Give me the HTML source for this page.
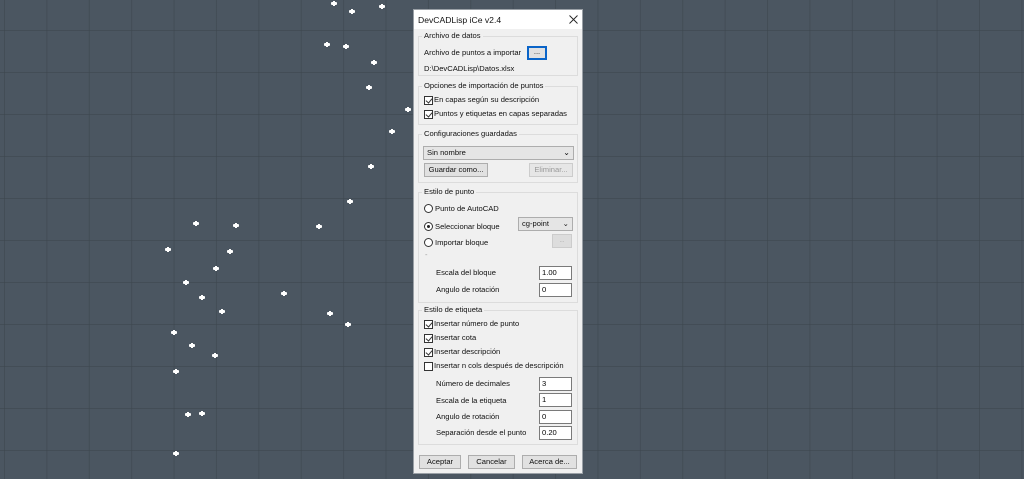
<!DOCTYPE html>
<html><head><meta charset="utf-8"><style>
*{margin:0;padding:0;box-sizing:border-box}
body{width:1024px;height:479px;overflow:hidden;position:relative;background-color:#4b5661;
background-image:linear-gradient(90deg,rgba(60,69,77,.55) 1px,transparent 1px),linear-gradient(0deg,rgba(60,69,77,.55) 1px,transparent 1px);
background-size:42.4px 42px;background-position:4px 31px;font-family:"Liberation Sans",sans-serif}
.p{position:absolute;width:6px;height:3px;background:#fff;border-radius:1px}
.p:after{content:"";position:absolute;left:2px;top:-1px;width:2px;height:5px;background:#fff}
.dlg{position:absolute;left:413px;top:9px;width:170px;height:465px;background:#f0f0f0;border:1px solid #9aa0a6}
.tb{position:absolute;left:0;top:0;width:168px;height:19px;background:#fff}
.t{position:absolute;font-size:7.6px;color:#111;white-space:nowrap;line-height:10px}
.g{position:absolute;border:1px solid #dcdcdc;left:4px;width:160px}
.gl{position:absolute;font-size:7.6px;color:#111;background:#f0f0f0;padding:0 2px;left:3px;top:-6px;line-height:10px;white-space:nowrap}
.cb{position:absolute;width:9px;height:9px;border:1px solid #333;background:#fff}
.cb.on:after{content:"";position:absolute;left:2px;top:0px;width:3px;height:5px;border:solid #333;border-width:0 1px 1px 0;transform:rotate(40deg)}
.rb{position:absolute;width:9px;height:9px;border:1px solid #333;border-radius:50%;background:#fff}
.rb.on:after{content:"";position:absolute;left:2px;top:2px;width:3px;height:3px;border-radius:50%;background:#222}
.in{position:absolute;width:33px;height:14px;background:#fff;border:1px solid #7a7a7a;font-size:7.6px;padding:1px 2px;line-height:10px}
.bt{position:absolute;height:14px;background:#e1e1e1;border:1px solid #adadad;font-size:7.6px;text-align:center;line-height:12px;color:#111}
</style></head><body>
<div class="p" style="left:331px;top:2px"></div><div class="p" style="left:349px;top:10px"></div><div class="p" style="left:379px;top:5px"></div>
<div class="p" style="left:324px;top:43px"></div><div class="p" style="left:343px;top:45px"></div><div class="p" style="left:371px;top:61px"></div>
<div class="p" style="left:366px;top:86px"></div><div class="p" style="left:405px;top:108px"></div><div class="p" style="left:389px;top:130px"></div>
<div class="p" style="left:368px;top:165px"></div><div class="p" style="left:347px;top:200px"></div><div class="p" style="left:316px;top:225px"></div>
<div class="p" style="left:193px;top:222px"></div><div class="p" style="left:233px;top:224px"></div><div class="p" style="left:165px;top:248px"></div>
<div class="p" style="left:227px;top:250px"></div><div class="p" style="left:213px;top:267px"></div><div class="p" style="left:183px;top:281px"></div>
<div class="p" style="left:199px;top:296px"></div><div class="p" style="left:281px;top:292px"></div><div class="p" style="left:219px;top:310px"></div>
<div class="p" style="left:327px;top:312px"></div><div class="p" style="left:345px;top:323px"></div><div class="p" style="left:171px;top:331px"></div>
<div class="p" style="left:189px;top:344px"></div><div class="p" style="left:212px;top:354px"></div><div class="p" style="left:173px;top:370px"></div>
<div class="p" style="left:185px;top:413px"></div><div class="p" style="left:199px;top:412px"></div><div class="p" style="left:173px;top:452px"></div>

<div class="dlg">
<div class="tb"></div>
<div class="t" style="left:4px;top:5px;font-size:8.6px">DevCADLisp iCe v2.4</div>
<svg style="position:absolute;left:155px;top:5px" width="9" height="9" viewBox="0 0 9 9"><path d="M0.5 0.5L8.5 8.5M8.5 0.5L0.5 8.5" stroke="#222" stroke-width="0.9" fill="none"/></svg>

<div class="g" style="top:26px;height:40px"><div class="gl">Archivo de datos</div></div>
<div class="t" style="left:10px;top:38px">Archivo de puntos a importar</div>
<div class="bt" style="left:113px;top:36px;width:20px;height:14px;border:2px solid #0a64c8;line-height:8px">...</div>
<div class="t" style="left:10px;top:54px">D:\DevCADLisp\Datos.xlsx</div>

<div class="g" style="top:76px;height:39px"><div class="gl">Opciones de importación de puntos</div></div>
<div class="cb on" style="left:10px;top:86px"></div><div class="t" style="left:20px;top:85px">En capas según su descripción</div>
<div class="cb on" style="left:10px;top:100px"></div><div class="t" style="left:20px;top:99px">Puntos y etiquetas en capas separadas</div>

<div class="g" style="top:124px;height:49px"><div class="gl">Configuraciones guardadas</div></div>
<div class="bt" style="left:9px;top:136px;width:151px;background:#e5e5e5;text-align:left;padding-left:3px">Sin nombre<span style="position:absolute;right:3px;font-size:8px">⌄</span></div>
<div class="bt" style="left:10px;top:153px;width:64px">Guardar como...</div>
<div class="bt" style="left:115px;top:153px;width:44px;color:#9a9a9a;border-color:#ccc;background:#e6e6e6">Eliminar...</div>

<div class="g" style="top:182px;height:111px"><div class="gl">Estilo de punto</div></div>
<div class="rb" style="left:10px;top:194px"></div><div class="t" style="left:21px;top:194px">Punto de AutoCAD</div>
<div class="rb on" style="left:10px;top:212px"></div><div class="t" style="left:21px;top:212px">Seleccionar bloque</div>
<div class="bt" style="left:104px;top:207px;width:55px;background:#e5e5e5;text-align:left;padding-left:3px">cg-point<span style="position:absolute;right:3px">⌄</span></div>
<div class="rb" style="left:10px;top:228px"></div><div class="t" style="left:21px;top:228px">Importar bloque</div>
<div class="bt" style="left:138px;top:224px;width:20px;color:#aaa;border-color:#ccc;background:#ddd;font-size:6px">...</div>
<div class="t" style="left:11px;top:240px;color:#999">-</div>
<div class="t" style="left:22px;top:258px">Escala del bloque</div><div class="in" style="left:125px;top:256px">1.00</div>
<div class="t" style="left:22px;top:275px">Angulo de rotación</div><div class="in" style="left:125px;top:273px">0</div>

<div class="g" style="top:300px;height:135px"><div class="gl">Estilo de etiqueta</div></div>
<div class="cb on" style="left:10px;top:310px"></div><div class="t" style="left:20px;top:309px">Insertar número de punto</div>
<div class="cb on" style="left:10px;top:324px"></div><div class="t" style="left:20px;top:323px">Insertar cota</div>
<div class="cb on" style="left:10px;top:338px"></div><div class="t" style="left:20px;top:337px">Insertar descripción</div>
<div class="cb" style="left:10px;top:352px"></div><div class="t" style="left:20px;top:351px">Insertar n cols después de descripción</div>
<div class="t" style="left:22px;top:369px">Número de decimales</div><div class="in" style="left:125px;top:367px">3</div>
<div class="t" style="left:22px;top:386px">Escala de la etiqueta</div><div class="in" style="left:125px;top:383px">1</div>
<div class="t" style="left:22px;top:402px">Angulo de rotación</div><div class="in" style="left:125px;top:400px">0</div>
<div class="t" style="left:22px;top:418px">Separación desde el punto</div><div class="in" style="left:125px;top:416px">0.20</div>

<div class="bt" style="left:5px;top:445px;width:42px">Aceptar</div>
<div class="bt" style="left:54px;top:445px;width:47px">Cancelar</div>
<div class="bt" style="left:108px;top:445px;width:55px">Acerca de...</div>
</div>
</body></html>
